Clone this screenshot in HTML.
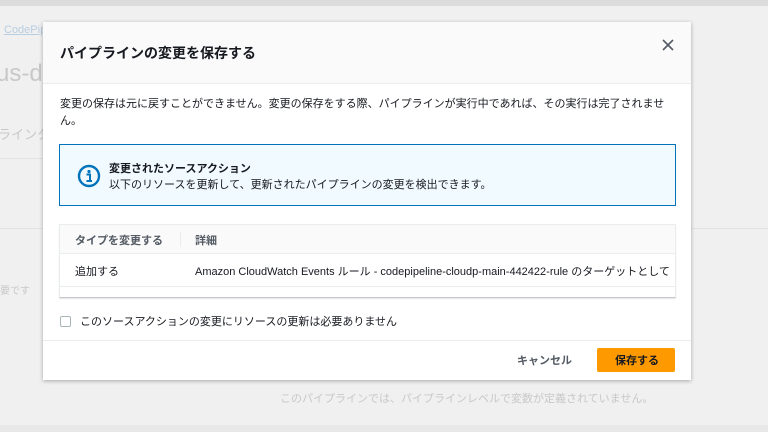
<!DOCTYPE html>
<html><head><meta charset="utf-8"><style>
*{box-sizing:border-box;margin:0;padding:0}
body{width:768px;height:432px;overflow:hidden;background:#f0f0f0;font-family:"Liberation Sans","Noto Sans CJK JP",sans-serif;position:relative;color:#16191f}
.abs{position:absolute;white-space:nowrap}
.bg{color:#c8c8c8}
.modal{position:absolute;left:43px;top:22px;width:648px;height:358px;background:#fff;box-shadow:0 1px 4px rgba(0,0,0,.3)}
.hdr{position:absolute;left:0;top:0;width:648px;height:62px;background:#fafafa;border-bottom:1px solid #eaeded}
</style></head><body>
<div class="abs" style="left:0;top:0;width:768px;height:6px;background:#dcdcdc"></div>
<div class="abs bg" style="left:4px;top:24px;font-size:11px;color:#b9cde0;text-decoration:underline">CodePipeline</div>
<div class="abs bg" style="left:-4px;top:60px;font-size:24px">us-d</div>
<div class="abs bg" style="left:-2px;top:124px;font-size:13px">ラインタ</div>
<div class="abs" style="left:0;top:158px;width:43px;height:1px;background:#e2e2e2"></div>
<div class="abs" style="left:0;top:228px;width:768px;height:1px;background:#e2e2e2"></div>
<div class="abs bg" style="left:0;top:282px;font-size:10px">要です</div>
<div class="abs bg" style="left:280px;top:390px;font-size:11px">このパイプラインでは、パイプラインレベルで変数が定義されていません。</div>
<div class="abs" style="left:0;top:425px;width:768px;height:7px;background:#e8e8e8"></div>
<div class="modal">
 <div class="hdr"></div>
 <div class="abs" style="left:17px;top:21px;font-size:14px;font-weight:bold">パイプラインの変更を保存する</div>
 <svg class="abs" style="left:619px;top:17px" width="12" height="12"><path d="M1 1L11 11M11 1L1 11" stroke="#545b64" stroke-width="1.6"/></svg>
 <div class="abs" style="left:17px;top:74px;font-size:11px;line-height:17px;color:#16191f;white-space:normal;width:620px">変更の保存は元に戻すことができません。変更の保存をする際、パイプラインが実行中であれば、その実行は完了されません。</div>
 <div class="abs" style="left:16px;top:122px;width:617px;height:62px;border:1px solid #0073bb;background:#f1faff"></div>
 <svg class="abs" style="left:34px;top:142px" width="24" height="24"><circle cx="12" cy="12" r="10" fill="none" stroke="#0073bb" stroke-width="2.4"/><circle cx="12" cy="7.5" r="1.6" fill="#0073bb"/><path d="M9.5 10.5h3.5v6M9.5 17h5.5" stroke="#0073bb" stroke-width="2" fill="none"/></svg>
 <div class="abs" style="left:66px;top:138px;font-size:11px;font-weight:bold">変更されたソースアクション</div>
 <div class="abs" style="left:66px;top:154px;font-size:11px">以下のリソースを更新して、更新されたパイプラインの変更を検出できます。</div>
 <div class="abs" style="left:16px;top:202px;width:617px;height:74px;border:1px solid #eaeded;border-bottom:1px solid #c6c6cd;box-shadow:0 1px 1px rgba(0,0,0,.1);overflow:hidden">
  <div class="abs" style="left:0;top:0;width:617px;height:29px;background:#fafafa;border-bottom:1px solid #eaeded"></div>
  <div class="abs" style="left:120px;top:7px;width:1px;height:15px;background:#eaeded"></div>
  <div class="abs" style="left:15px;top:7px;font-size:11px;font-weight:bold;color:#545b64">タイプを変更する</div>
  <div class="abs" style="left:135px;top:7px;font-size:11px;font-weight:bold;color:#545b64">詳細</div>
  <div class="abs" style="left:15px;top:38px;font-size:11px">追加する</div>
  <div class="abs" style="left:135px;top:38px;font-size:11px">Amazon CloudWatch Events ルール - codepipeline-cloudp-main-442422-rule のターゲットとして</div>
  <div class="abs" style="left:0;top:61px;width:617px;height:1px;background:#eaeded"></div>
 </div>
 <div class="abs" style="left:17px;top:294px;width:11px;height:11px;border:1px solid #aab7b8;border-radius:2px"></div>
 <div class="abs" style="left:37px;top:291px;font-size:11px">このソースアクションの変更にリソースの更新は必要ありません</div>
 <div class="abs" style="left:0;top:318px;width:648px;height:1px;background:#eaeded"></div>
 <div class="abs" style="left:474px;top:330px;font-size:11px;font-weight:bold;color:#545b64">キャンセル</div>
 <div class="abs" style="left:554px;top:326px;width:78px;height:24px;background:#ff9900;border-radius:2px"></div>
 <div class="abs" style="left:572px;top:330px;font-size:11px;font-weight:bold;color:#16191f">保存する</div>
</div>
</body></html>
